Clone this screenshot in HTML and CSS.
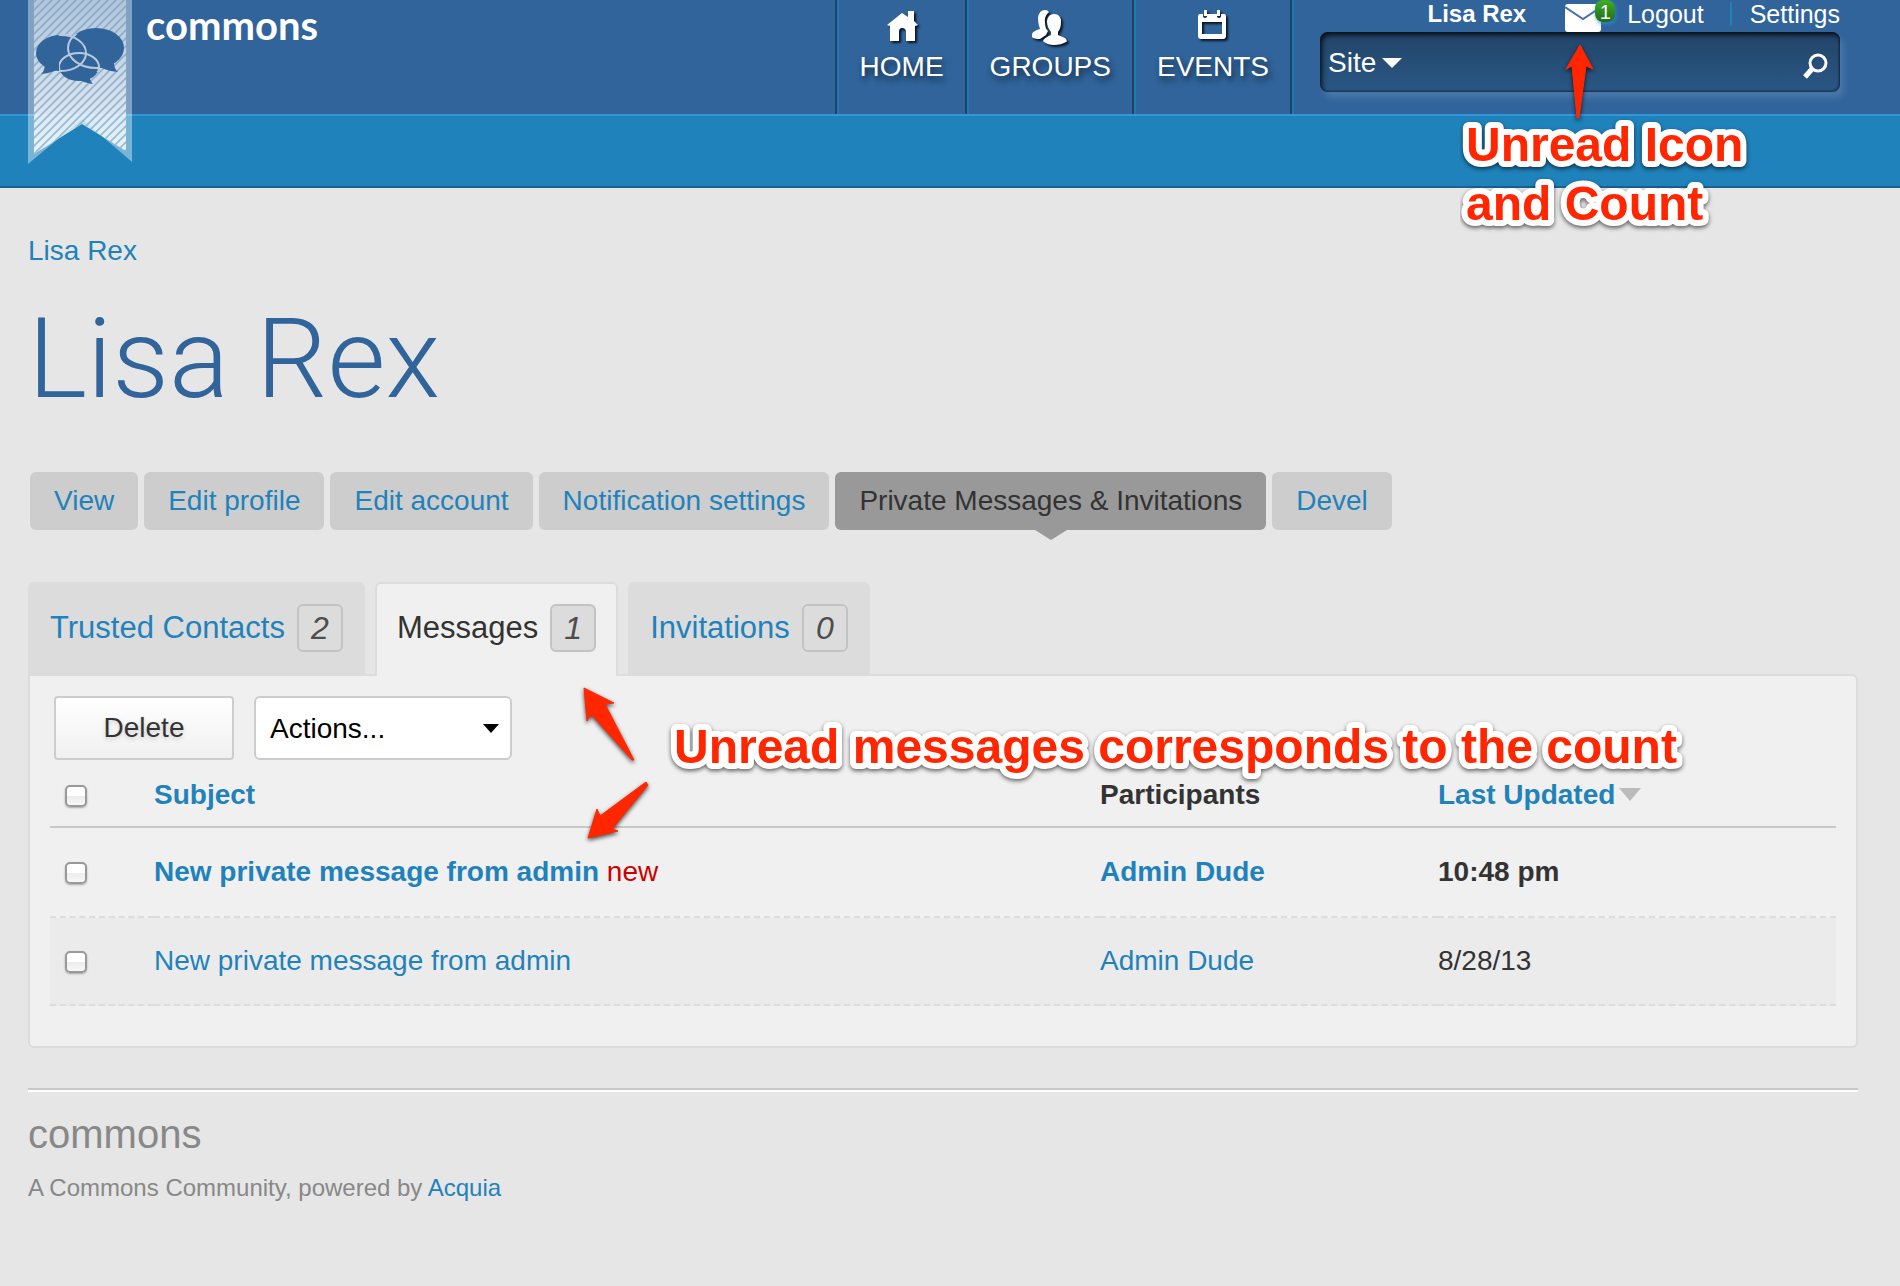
FILE: index.html
```
<!DOCTYPE html>
<html lang="en">
<head>
    <meta charset="utf-8">
    <title>Lisa Rex | commons</title>
    <link rel="stylesheet" href="styles.css">
</head>
<body>
    <header class="header">
        <div class="header-top">
            <a href="#" class="logo" aria-label="Home">
                <svg width="104" height="164" viewBox="0 0 104 164">
                    <defs>
                        <linearGradient id="ribbonFade" x1="0" y1="0" x2="0" y2="1">
                            <stop offset="0" stop-color="#fff" stop-opacity=".38"/>
                            <stop offset="1" stop-color="#fff" stop-opacity=".85"/>
                        </linearGradient>
                        <pattern id="ribbonLines" width="8" height="8" patternUnits="userSpaceOnUse">
                            <path d="M-1 9L9 -1M-1 1L1 -1M7 9L9 7" stroke="#6d9cc4" stroke-width="1.6" stroke-opacity=".65"/>
                        </pattern>
                        <clipPath id="overlap"><path d="M31 34H72V72H31z"/></clipPath>
                    </defs>
                    <path d="M0 0H104V162L54 119L0 164z" fill="#fff" fill-opacity=".4"/>
                    <path d="M6 0H98V151L54 124L6 154z" fill="url(#ribbonFade)"/>
                    <path d="M6 0H98V151L54 124L6 154z" fill="url(#ribbonLines)"/>
                    <g fill="#30649b">
                        <ellipse cx="33" cy="53" rx="25" ry="18"/>
                        <ellipse cx="68" cy="48" rx="28" ry="20"/>
                        <ellipse cx="51" cy="67" rx="20" ry="14"/>
                        <path d="M16 62Q18 70 13 74Q25 73 32 68z"/>
                        <path d="M86 58Q85 68 90 72Q78 71 70 66z"/>
                        <path d="M61 73Q61 80 65 84Q56 83 50 79z"/>
                    </g>
                    <g clip-path="url(#overlap)" fill="none" stroke="#b9c9dc" stroke-width="2">
                        <ellipse cx="33" cy="53" rx="25" ry="18"/>
                        <ellipse cx="68" cy="48" rx="28" ry="20"/>
                        <ellipse cx="51" cy="67" rx="20" ry="14"/>
                    </g>
                </svg>
            </a>
            <a href="#" class="site-name">commons</a>

            <nav class="main-nav">
                <a href="#">
                    <svg width="32" height="36" viewBox="0 0 32 36">
                        <path d="M16 3L22 7V1H28V11L32 15L29 16V31H20V22Q20 18 16 18Q13 18 13 22V31H4V16L1 15z"/>
                    </svg>
                    HOME
                </a>
                <a href="#">
                    <svg width="36" height="36" viewBox="0 0 36 36">
                        <path d="M6 8Q7 0 13 0Q16 0 17 2Q12 6 13 13Q13 18 16 21L14 25L8 29Q2 29 0 27V24Q1 21 8 19Q6 14 6 8z"/>
                        <path d="M15 11Q16 4 22 4Q29 4 29 12Q29 18 26 22V25L33 28Q36 31 34 32Q29 35 22 35Q15 35 11 31Q12 28 19 25V22Q15 17 15 11z"/>
                    </svg>
                    GROUPS
                </a>
                <a href="#">
                    <svg width="32" height="36" viewBox="0 0 32 36">
                        <path fill-rule="evenodd" d="M3 4H6V7Q8 9 10 7V4H20V7Q22 9 24 7V4H27Q29 4 29 7V26Q29 29 26 29H4Q1 29 1 26V7Q1 4 3 4zM5 12V24H25V12z"/>
                        <path d="M7 0H10V6H7zM20 0H23V6H20z"/>
                    </svg>
                    EVENTS
                </a>
            </nav>

            <div class="account">
                <div class="account-links">
                    <a href="#" class="account-name">Lisa Rex</a>
                    <a href="#" class="unread" aria-label="Unread messages">
                        <svg width="36" height="28" viewBox="0 0 36 28">
                            <rect width="36" height="28" rx="3" fill="#fff"/>
                            <path d="M0 3L18 15L36 3" fill="none" stroke="#4674a6" stroke-width="2"/>
                        </svg>
                        <span class="unread-count">1</span>
                    </a>
                    <a href="#">Logout</a>
                    <a href="#" class="settings">Settings</a>
                </div>
                <form class="search">
                    <button type="button" class="search-scope">Site</button>
                    <input type="text" class="search-text" aria-label="Search">
                    <button type="submit" class="search-go" aria-label="Search">
                        <svg width="26" height="26" viewBox="0 0 26 26" fill="none" stroke="#fff">
                            <circle cx="16" cy="10" r="8" stroke-width="3"/>
                            <path d="M10 16L3 24" stroke-width="5"/>
                        </svg>
                    </button>
                </form>
            </div>
        </div>
        <div class="header-band"></div>

        <svg class="note note-header" width="300" height="200" viewBox="0 0 300 200">
            <path class="note-arrow" d="M120 5L133 29L126 26L119 78H117L112 26L106 29z"/>
            <text class="note-text" x="6" y="121">Unread Icon</text>
            <text class="note-text" x="6" y="180">and Count</text>
        </svg>
    </header>

    <main class="page">
        <a href="#" class="breadcrumb">Lisa Rex</a>
        <h1>Lisa Rex</h1>

        <nav class="tabs">
            <a href="#">View</a>
            <a href="#">Edit profile</a>
            <a href="#">Edit account</a>
            <a href="#">Notification settings</a>
            <a href="#" class="active">Private Messages &amp; Invitations</a>
            <a href="#">Devel</a>
        </nav>

        <nav class="subtabs">
            <a href="#">Trusted Contacts <em>2</em></a>
            <a href="#" class="active">Messages <em>1</em></a>
            <a href="#">Invitations <em>0</em></a>
        </nav>

        <section class="panel">
            <div class="actions">
                <button type="button" class="delete">Delete</button>
                <div class="select-box">
                    <select aria-label="Actions">
                        <option>Actions...</option>
                    </select>
                </div>
            </div>
            <table class="messages">
                <thead>
                    <tr>
                        <th class="col-check"><input type="checkbox" aria-label="Select all"></th>
                        <th><a href="#">Subject</a></th>
                        <th class="col-people">Participants</th>
                        <th class="col-date"><a href="#" class="sorted">Last Updated</a></th>
                    </tr>
                </thead>
                <tbody>
                    <tr class="is-unread">
                        <td><input type="checkbox" aria-label="Select message"></td>
                        <td><a href="#">New private message from admin</a> <span class="marker">new</span></td>
                        <td><a href="#">Admin Dude</a></td>
                        <td>10:48 pm</td>
                    </tr>
                    <tr class="even">
                        <td><input type="checkbox" aria-label="Select message"></td>
                        <td><a href="#">New private message from admin</a></td>
                        <td><a href="#">Admin Dude</a></td>
                        <td>8/28/13</td>
                    </tr>
                </tbody>
            </table>

            <svg class="note note-messages" width="1140" height="180" viewBox="0 0 1140 180">
                <path class="note-arrow" d="M14 12L44 27L35 28L64 84H62L21 38L17 45z"/>
                <path class="note-arrow" d="M18 162L27 133L30 140L76 106L78 109L42 153L48 155z"/>
                <text class="note-text" x="104" y="87">Unread messages corresponds to the count</text>
            </svg>
        </section>

        <footer class="footer">
            <p class="footer-name">commons</p>
            <p class="footer-text">A Commons Community, powered by <a href="#">Acquia</a></p>
        </footer>
    </main>
</body>
</html>
```
FILE: styles.css
```
* {
    box-sizing: border-box;
}
body {
    margin: 0;
    background-color: #e6e6e6;
    color: #333;
    font-family: "Liberation Sans", Arial, sans-serif;
    font-size: 28px;
    line-height: 36px;
}
a {
    color: #1f82bb;
    text-decoration: none;
}
button, input, select {
    font-family: inherit;
    font-size: 28px;
}

/* header */
.header {
    position: relative;
}
.header-top {
    display: flex;
    height: 114px;
    padding: 0 60px 0 28px;
    background-color: #30649b;
}
.header-top a {
    color: #fff;
}
.header-band {
    height: 74px;
    background-color: #1f82bb;
    border-top: 2px solid #3297d8;
    border-bottom: 2px solid #1b628f;
}
.logo {
    width: 104px;
    height: 114px;
    position: relative;
}
.logo svg {
    position: absolute;
    top: 0;
    left: 0;
}
.site-name {
    margin-left: 14px;
    font-family: Lato, sans-serif;
    font-size: 40px;
    font-weight: bold;
    line-height: 50px;
}
.main-nav {
    display: flex;
    margin-left: auto;
    border-left: 2px solid #1c4468;
}
.main-nav a {
    display: flex;
    flex-direction: column;
    align-items: center;
    padding: 10px 21px 0;
    border-left: 2px solid #1d79b0;
    border-right: 2px solid #1c4468;
    line-height: 42px;
    text-shadow: 2px 4px 6px rgba(0, 0, 0, .6);
}
.main-nav svg {
    fill: #fff;
    filter: drop-shadow(2px 2px 1px rgba(0, 0, 0, .8));
}
.account {
    width: 548px;
    padding-left: 26px;
    border-left: 2px solid #1d79b0;
}
.account-links {
    display: flex;
    justify-content: flex-end;
    height: 32px;
    font-size: 25px;
    line-height: 28px;
}
.account-name {
    font-weight: bold;
    font-size: 24px;
}
.unread {
    position: relative;
    margin: 4px 26px 0 39px;
    height: 28px;
}
.unread svg {
    display: block;
}
.unread-count {
    position: absolute;
    top: -4px;
    right: -14px;
    width: 20px;
    height: 22px;
    border-radius: 0 0 8px 8px;
    background: linear-gradient(#3fae2a, #1f6c12);
    border-radius: 8px;
    font-size: 20px;
    line-height: 24px;
    text-align: center;
    box-shadow: 1px 2px 4px rgba(40, 140, 220, .8);
}
.settings {
    margin-left: 26px;
    padding-left: 20px;
    background: linear-gradient(#1f82bb, #1f82bb) 0 2px / 2px 24px no-repeat;
}
.search {
    display: flex;
    align-items: center;
    height: 60px;
    border-radius: 8px;
    background: linear-gradient(#234468, #295785);
    box-shadow: inset 2px 3px 5px rgba(0, 0, 0, .8), inset -1px -1px 2px rgba(0, 0, 0, .4), 4px 6px 6px rgba(255, 255, 255, .12);
}
.search button {
    display: flex;
    align-items: center;
    border: 0;
    background: none;
    color: #fff;
}
.search-scope {
    padding: 2px 8px 0;
}
.search-scope::after {
    content: "";
    margin-left: 6px;
    border: 10px solid transparent;
    border-top-color: #fff;
    border-bottom: 0;
}
.search-text {
    flex: 1;
    min-width: 0;
    border: 0;
    background: none;
    color: #fff;
}
.search-go {
    padding: 8px 12px 0;
}

/* page */
.page {
    padding: 45px 42px 40px 28px;
}
.breadcrumb {
    display: block;
}
h1 {
    margin: 30px 0 53px;
    color: #30649b;
    font-family: Roboto, sans-serif;
    font-size: 112px;
    font-weight: 300;
    line-height: 120px;
}
.tabs {
    display: flex;
    gap: 6px;
    margin-left: 2px;
}
.tabs a {
    position: relative;
    padding: 0 24px;
    border-radius: 6px;
    background-color: #cdcdcd;
    line-height: 58px;
}
.tabs .active {
    background-color: #999;
    color: #333;
}
.tabs .active::after {
    content: "";
    position: absolute;
    top: 100%;
    left: calc(50% - 16px);
    border: 16px solid transparent;
    border-top: 10px solid #999;
    border-bottom: 0;
}
.subtabs {
    display: flex;
    gap: 10px;
    margin-top: 52px;
    margin-bottom: -2px;
}
.subtabs a {
    position: relative;
    display: flex;
    align-items: center;
    gap: 12px;
    padding: 20px 20px 22px;
    border: 2px solid #dcdcdc;
    border-bottom: 0;
    border-radius: 6px 6px 0 0;
    background-color: #dcdcdc;
    font-size: 31px;
}
.subtabs em {
    width: 46px;
    height: 48px;
    border: 2px solid #c3c3c3;
    border-radius: 6px;
    color: #4d4d4d;
    font-size: 32px;
    line-height: 44px;
    text-align: center;
}
.subtabs .active {
    z-index: 1;
    padding-bottom: 24px;
    background-color: #f0f0f0;
    color: #333;
}
.subtabs a:not(.active) {
    margin-bottom: 2px;
}
.subtabs .active em {
    background-color: #dcdcdc;
}
.panel {
    position: relative;
    padding: 20px 20px 40px;
    border: 2px solid #dcdcdc;
    border-radius: 0 6px 6px 6px;
    background-color: #f0f0f0;
}
.actions {
    display: flex;
    gap: 20px;
    margin-left: 4px;
}
.delete {
    width: 180px;
    height: 64px;
    border: 2px solid #ccc;
    border-radius: 4px;
    background: linear-gradient(#fff, #f0f0f0);
    color: #333;
    text-shadow: 0 2px 4px #ccc;
}
.select-box {
    position: relative;
}
.select-box::after {
    content: "";
    position: absolute;
    top: 28px;
    right: 13px;
    border: 8px solid transparent;
    border-top: 9px solid #000;
    border-bottom: 0;
    pointer-events: none;
}
.select-box select {
    width: 258px;
    height: 64px;
    padding: 0 14px;
    border: 2px solid #ccc;
    border-radius: 6px;
    background-color: #fff;
    color: #000;
    appearance: none;
}
.messages {
    width: 100%;
    border-collapse: separate;
    border-spacing: 0;
}
.messages th {
    height: 68px;
    padding: 3px 0 0;
    border-bottom: 2px solid #c8c8c8;
    text-align: left;
}
.messages td {
    height: 90px;
    padding: 0;
    border-bottom: 2px dashed #dcdcdc;
}
.messages .col-check {
    width: 104px;
}
.messages .col-people {
    width: 338px;
}
.messages .col-date {
    width: 398px;
}
.messages .even {
    background-color: #ebebeb;
}
.messages .even td {
    height: 88px;
}
.is-unread {
    font-weight: bold;
}
.marker {
    color: #c00;
    font-weight: normal;
}
.sorted::after {
    content: "";
    display: inline-block;
    margin-left: 4px;
    vertical-align: 3px;
    border: 11px solid transparent;
    border-top: 13px solid #bbb;
    border-bottom: 0;
}
input[type="checkbox"] {
    display: block;
    width: 22px;
    height: 22px;
    margin: 2px 0 0 15px;
    border: 2px solid #999;
    border-radius: 5px;
    background: linear-gradient(#fff 50%, #ececec 50%, #f8f8f8);
    box-shadow: 0 1px 2px rgba(0, 0, 0, .3);
    appearance: none;
}

/* footer */
.footer {
    margin-top: 40px;
    padding-top: 20px;
    border-top: 2px solid #c8c8c8;
    box-shadow: inset 0 2px #fff;
    color: #888;
}
.footer p {
    margin: 0;
}
.footer .footer-name {
    margin-bottom: 14px;
    font-size: 40px;
    line-height: 48px;
}
.footer-text {
    font-size: 24px;
    line-height: 32px;
}

/* notes drawn over the page */
.note {
    position: absolute;
    z-index: 2;
    pointer-events: none;
}
.note-header {
    top: 40px;
    right: 140px;
}
.note-messages {
    top: 0;
    left: 540px;
}
.note-arrow {
    fill: #ff2600;
    stroke: #ff2600;
    stroke-width: 1px;
    stroke-linejoin: round;
    filter: drop-shadow(0 2px 2px rgba(0, 0, 0, .7));
}
.note-text {
    fill: #ff2600;
    stroke: #fff;
    stroke-width: 12px;
    stroke-linejoin: round;
    paint-order: stroke;
    font-size: 48px;
    font-weight: bold;
    filter: drop-shadow(0 2px 2px rgba(0, 0, 0, .6));
}
```
